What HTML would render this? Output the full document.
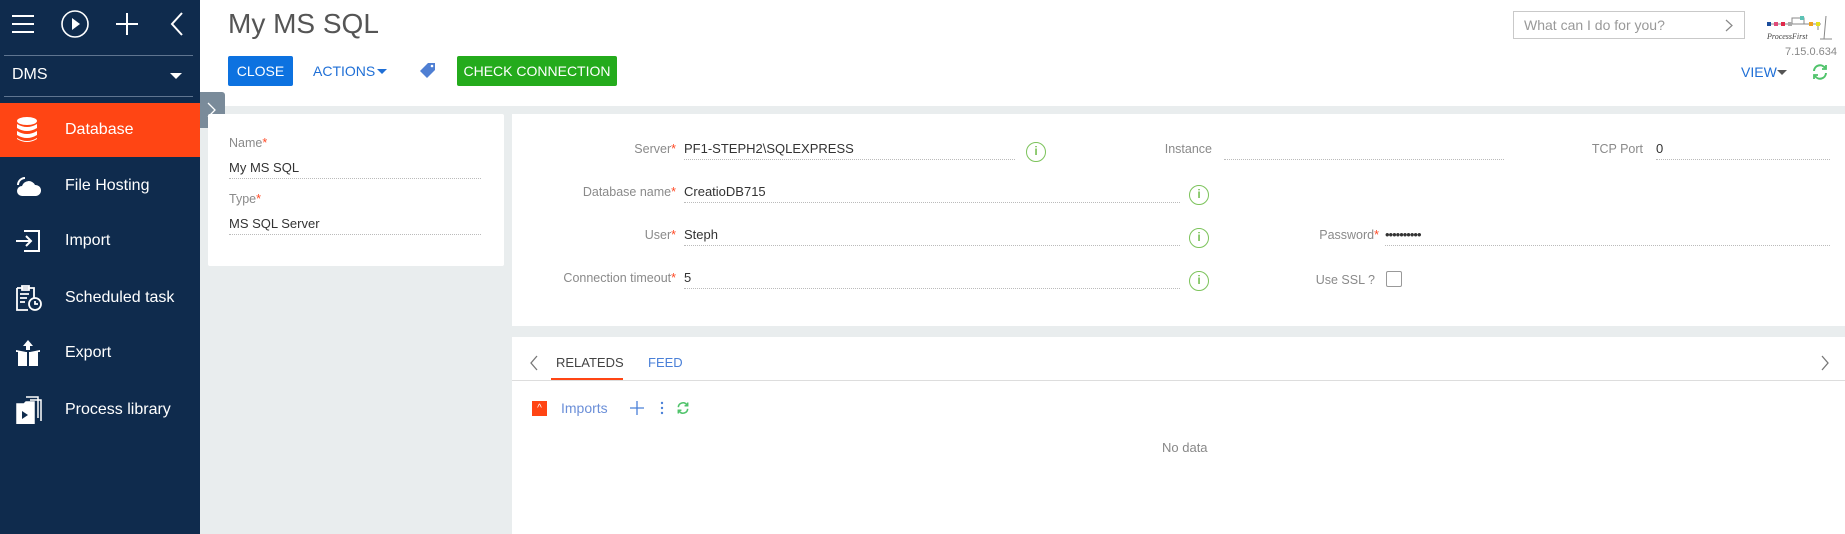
<!DOCTYPE html>
<html><head><meta charset="utf-8"><style>
*{margin:0;padding:0;box-sizing:border-box}
body{width:1845px;height:534px;overflow:hidden;background:#e9edee;font-family:"Liberation Sans",sans-serif;position:relative;color:#444}
.a{position:absolute}
#side{left:0;top:0;width:200px;height:534px;background:#0f2b4d;color:#fff}
.sep{position:absolute;left:4px;width:189px;height:1px;background:#5f7590}
.item{position:absolute;left:0;width:200px;height:52px;font-size:16px;color:#fff;display:flex;align-items:center}
.item span{position:absolute;left:65px}
.item svg{position:absolute;left:16px}
#hdr{left:200px;top:0;width:1645px;height:106px;background:#fff}
.lbl{position:absolute;font-size:12.5px;color:#8a8a8a;text-align:right}
.lbl i{color:#ff4a26;font-style:normal}
.val{position:absolute;font-size:13px;color:#333;border-bottom:1px dotted #bbb;height:22px;padding-top:3px}
.info{position:absolute;width:20px;height:20px;border:1.5px solid #7cc35b;border-radius:50%;color:#7cc35b;font-size:12px;font-weight:bold;text-align:center;line-height:17px}
</style></head><body>
<div id="side" class="a">
 <svg class="a" style="left:12px;top:13px" width="22" height="22" viewBox="0 0 22 22" stroke="#fff" stroke-width="2"><path d="M0 3H22M0 11H22M0 19H22"/></svg>
 <svg class="a" style="left:60px;top:9px" width="30" height="30" viewBox="0 0 30 30"><circle cx="15" cy="15" r="13" fill="none" stroke="#fff" stroke-width="1.6"/><path d="M12 9L20 15L12 21Z" fill="#fff"/></svg>
 <svg class="a" style="left:116px;top:13px" width="22" height="22" viewBox="0 0 22 22" stroke="#fff" stroke-width="2"><path d="M11 0V22M0 11H22"/></svg>
 <svg class="a" style="left:170px;top:12px" width="14" height="24" viewBox="0 0 14 24" stroke="#fff" stroke-width="2" fill="none"><path d="M12 1L2 12L12 23"/></svg>
 <div class="sep" style="top:55px"></div>
 <div class="a" style="left:12px;top:66px;font-size:16px">DMS</div>
 <div class="a" style="left:170px;top:73px;border:6px solid transparent;border-top:6px solid #fff;border-bottom:0"></div>
 <div class="sep" style="top:96px"></div>
 <div class="item" style="top:103px;height:54px;background:#ff4514"><svg width="22" height="26" viewBox="0 0 22 26" fill="#fff"><ellipse cx="11" cy="4" rx="10" ry="4"/><path d="M1 7Q11 13 21 7V11Q11 17 1 11Z"/><path d="M1 14Q11 20 21 14V18Q11 24 1 18Z"/><path d="M1 21Q11 27 21 21V22Q11 28 1 22Z"/></svg><span>Database</span></div>
 <div class="item" style="top:160px"><svg width="26" height="20" viewBox="0 0 26 20" fill="#fff"><path d="M6 20A5 5 0 0 1 6 10A7 7 0 0 1 19 9A5.5 5.5 0 0 1 20 20Z"/><path d="M2 9A7 7 0 0 1 9 2" stroke="#fff" stroke-width="2" fill="none"/></svg><span>File Hosting</span></div>
 <div class="item" style="top:215px"><svg width="24" height="22" viewBox="0 0 24 22" fill="none" stroke="#fff" stroke-width="2"><path d="M8 1H23V21H8M0 11H15M10 6L15 11L10 16"/></svg><span>Import</span></div>
 <div class="item" style="top:272px"><svg width="26" height="26" viewBox="0 0 26 26" fill="none" stroke="#fff" stroke-width="1.8"><path d="M1 3H18V13M12 25H1V3M6 1H13V5H6Z"/><path d="M4 9H13M4 13H11M4 17H9"/><circle cx="19" cy="19" r="6"/><path d="M19 16V19H22"/></svg><span>Scheduled task</span></div>
 <div class="item" style="top:327px"><svg width="24" height="26" viewBox="0 0 24 26" fill="#fff"><path d="M12 0L17 6H14V10H10V6H7Z"/><rect x="2" y="12" width="9" height="14"/><rect x="13" y="12" width="9" height="14"/><path d="M0 10L10 12H0ZM24 10L14 12H24Z"/></svg><span>Export</span></div>
 <div class="item" style="top:384px"><svg width="28" height="28" viewBox="0 0 28 28" fill="none" stroke="#fff" stroke-width="1.5"><path d="M10 1H22V22M14 4H25V25"/><path d="M1 8H8L10 6H18V28H1Z" fill="#fff"/><path d="M6 15L12 19L6 23Z" fill="#0f2b4d" stroke="none"/></svg><span>Process library</span></div>
</div>
<div id="hdr" class="a"></div>
<div class="a" style="left:200px;top:92px;width:25px;height:36px;background:#7a8b9a;border-radius:0 3px 3px 0"><svg width="25" height="36" viewBox="0 0 25 36" fill="none" stroke="#fff" stroke-width="1.3"><path d="M8 11L15 18L8 25"/></svg></div>
<div class="a" style="left:228px;top:8px;font-size:28px;color:#555;font-weight:300">My MS SQL</div>
<div class="a" style="left:228px;top:56px;width:65px;height:30px;background:#0d72e0;color:#fff;font-size:14px;text-align:center;line-height:30px;border-radius:2px">CLOSE</div>
<div class="a" style="left:313px;top:63px;font-size:14px;color:#1f6fd6">ACTIONS</div>
<div class="a" style="left:377px;top:69px;border:5px solid transparent;border-top:5px solid #1f6fd6;border-bottom:0"></div>
<svg class="a" style="left:420px;top:62px" width="16" height="16" viewBox="0 0 16 16"><path d="M8 1H15V8L7 16L0 9Z" fill="#4f7fd3"/><circle cx="12" cy="4" r="1.3" fill="#fff"/></svg>
<div class="a" style="left:457px;top:56px;width:160px;height:30px;background:#24ab1c;color:#fff;font-size:14px;text-align:center;line-height:30px;border-radius:2px">CHECK CONNECTION</div>
<div class="a" style="left:1513px;top:11px;width:232px;height:28px;border:1px solid #c9c9c9;font-size:14px;color:#999;padding:5px 10px">What can I do for you?<svg style="position:absolute;right:11px;top:7px" width="8" height="13" viewBox="0 0 8 13" fill="none" stroke="#888" stroke-width="1.2"><path d="M1 1L7 6.5L1 12"/></svg></div>
<svg class="a" style="left:1766px;top:14px" width="66" height="28" viewBox="0 0 66 28"><g stroke="#888" stroke-width="1" fill="none"><path d="M3 10H55M26 10V4H38V10M52 10V16"/><path d="M60 2L58 25M54 25H66"/></g><rect x="1" y="8" width="4" height="4" fill="#1b4d9c"/><rect x="8" y="8" width="4" height="4" fill="#e04a78"/><rect x="15" y="8" width="4" height="4" fill="#e0284a"/><rect x="22" y="8" width="4" height="4" fill="#aaa"/><rect x="34" y="2" width="4" height="4" fill="#5cc2b5"/><rect x="43" y="8" width="4" height="4" fill="#f0a020"/><rect x="50" y="8" width="4" height="4" fill="#e6e020"/><text x="1" y="25" font-size="8" font-style="italic" font-family="Liberation Serif" fill="#444">ProcessFirst</text></svg>
<div class="a" style="left:1785px;top:46px;font-size:11px;color:#888">7.15.0.634</div>
<div class="a" style="left:1741px;top:64px;font-size:14px;color:#1f6fd6">VIEW</div>
<div class="a" style="left:1777px;top:70px;border:5px solid transparent;border-top:5px solid #555;border-bottom:0"></div>
<svg class="a" style="left:1811px;top:63px" width="18" height="18" viewBox="0 0 18 18" fill="none" stroke="#4fc36a" stroke-width="2"><path d="M3 8A6 6 0 0 1 14 5M15 10A6 6 0 0 1 4 13"/><path d="M15 2V6H11M3 16V12H7" stroke-width="1.8"/></svg>

<div class="a" style="left:208px;top:114px;width:296px;height:152px;background:#fff;border-radius:2px"></div>
<div class="lbl" style="left:229px;top:136px;text-align:left">Name<i>*</i></div>
<div class="val" style="left:229px;top:157px;width:252px">My MS SQL</div>
<div class="lbl" style="left:229px;top:192px;text-align:left">Type<i>*</i></div>
<div class="val" style="left:229px;top:213px;width:252px">MS SQL Server</div>

<div class="a" style="left:512px;top:114px;width:1333px;height:212px;background:#fff"></div>
<div class="lbl" style="left:500px;width:176px;top:142px">Server<i>*</i></div>
<div class="val" style="left:684px;top:138px;width:331px">PF1-STEPH2\SQLEXPRESS</div>
<div class="info" style="left:1026px;top:142px">i</div>
<div class="lbl" style="left:1100px;width:112px;top:142px">Instance</div>
<div class="val" style="left:1224px;top:138px;width:280px"></div>
<div class="lbl" style="left:1500px;width:143px;top:142px">TCP Port</div>
<div class="val" style="left:1656px;top:138px;width:174px">0</div>
<div class="lbl" style="left:500px;width:176px;top:185px">Database name<i>*</i></div>
<div class="val" style="left:684px;top:181px;width:496px">CreatioDB715</div>
<div class="info" style="left:1189px;top:185px">i</div>
<div class="lbl" style="left:500px;width:176px;top:228px">User<i>*</i></div>
<div class="val" style="left:684px;top:224px;width:496px">Steph</div>
<div class="info" style="left:1189px;top:228px">i</div>
<div class="lbl" style="left:1200px;width:179px;top:228px">Password<i>*</i></div>
<div class="val" style="left:1385px;top:224px;width:445px;letter-spacing:-1px">••••••••••</div>
<div class="lbl" style="left:500px;width:176px;top:271px">Connection timeout<i>*</i></div>
<div class="val" style="left:684px;top:267px;width:496px">5</div>
<div class="info" style="left:1189px;top:271px">i</div>
<div class="lbl" style="left:1200px;width:175px;top:273px">Use SSL ?</div>
<div class="a" style="left:1386px;top:271px;width:16px;height:16px;border:1.5px solid #999;border-radius:2px"></div>

<div class="a" style="left:512px;top:337px;width:1333px;height:197px;background:#fff"></div>
<svg class="a" style="left:529px;top:355px" width="10" height="16" viewBox="0 0 10 16" fill="none" stroke="#777" stroke-width="1.3"><path d="M8 1L2 8L8 15"/></svg>
<div class="a" style="left:556px;top:355px;font-size:13px;color:#444">RELATEDS</div>
<div class="a" style="left:551px;top:378px;width:72px;height:3px;background:#ff4514"></div>
<div class="a" style="left:648px;top:355px;font-size:13px;color:#4a80d8">FEED</div>
<svg class="a" style="left:1820px;top:355px" width="10" height="16" viewBox="0 0 10 16" fill="none" stroke="#777" stroke-width="1.3"><path d="M2 1L8 8L2 15"/></svg>
<div class="a" style="left:512px;top:380px;width:1333px;height:1px;background:#ddd"></div>
<div class="a" style="left:532px;top:401px;width:15px;height:15px;background:#ff4514;color:#fff;font-size:10px;text-align:center;line-height:16px">^</div>
<div class="a" style="left:561px;top:400px;font-size:14px;color:#6b8fd8">Imports</div>
<svg class="a" style="left:630px;top:401px" width="14" height="14" viewBox="0 0 14 14" stroke="#4a80d8" stroke-width="1.3"><path d="M7 0V14M0 7H14"/></svg>
<svg class="a" style="left:660px;top:401px" width="4" height="14" viewBox="0 0 4 14" fill="#4a80d8"><circle cx="2" cy="2" r="1.2"/><circle cx="2" cy="7" r="1.2"/><circle cx="2" cy="12" r="1.2"/></svg>
<svg class="a" style="left:676px;top:401px" width="14" height="14" viewBox="0 0 18 18" fill="none" stroke="#4fc36a" stroke-width="2"><path d="M3 8A6 6 0 0 1 14 5M15 10A6 6 0 0 1 4 13"/><path d="M15 2V6H11M3 16V12H7"/></svg>
<div class="a" style="left:1162px;top:440px;font-size:13px;color:#888">No data</div>
</body></html>
